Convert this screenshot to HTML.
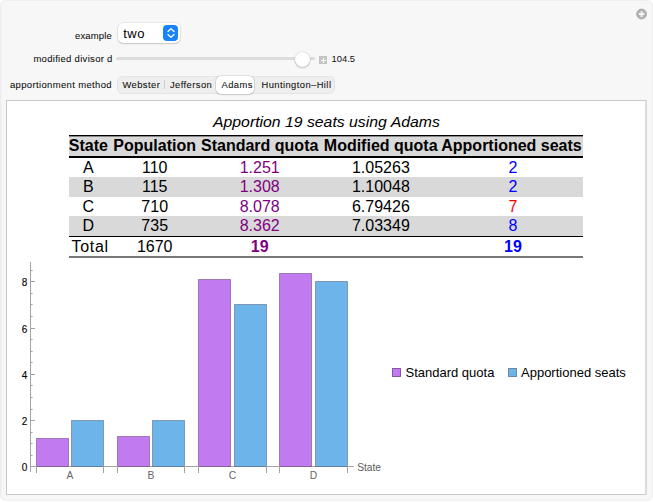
<!DOCTYPE html>
<html><head><meta charset="utf-8">
<style>
html,body{margin:0;padding:0;background:#fff;}
body{width:653px;height:502px;position:relative;overflow:hidden;font-family:"Liberation Sans",sans-serif;}
.frame{position:absolute;left:0;top:0;width:651px;height:499px;background:#f7f7f7;border:1px solid #ededed;border-top-color:#efefef;box-shadow:inset 1px 0 0 #f2f2f2;border-bottom-color:#f1f1f1;border-right-color:#eeeeee;border-radius:6px;}
.inner{position:absolute;left:6px;top:100px;width:638px;height:393px;background:#fff;border:1px solid #c9c9c9;border-right-color:#dcdcdc;box-shadow:1px 0 0 #dadada;}
.t{position:absolute;white-space:nowrap;font-family:"Liberation Sans",sans-serif;}
.r{position:absolute;left:69px;width:514px;}
.chart{position:absolute;left:0;top:0;}
.lbl{position:absolute;font-size:9.5px;letter-spacing:0.35px;line-height:12px;color:#111;-webkit-text-stroke:0.08px #111;text-align:right;white-space:nowrap;}
</style></head><body>
<div class="frame"></div>
<!-- plus circle icon -->
<svg style="position:absolute;left:634px;top:7px" width="15" height="15" viewBox="0 0 15 15"><circle cx="7.6" cy="7.05" r="4.95" fill="#b2b2b2" stroke="#a2a2a2" stroke-width="0.8"/><path d="M7.6 4.2 V9.9 M4.75 7.05 H10.45" stroke="#f2f2f2" stroke-width="2" /></svg>

<div class="lbl" style="left:-8px;width:120px;top:30px;letter-spacing:0.15px">example</div>
<div style="position:absolute;left:118px;top:23px;width:62px;height:20px;background:#fff;border-radius:5px;box-shadow:0 0 0 0.5px rgba(0,0,0,0.12),0 1px 1.5px rgba(0,0,0,0.15);"></div>
<div class="t" style="left:123.2px;top:26.2px;font-size:13px;letter-spacing:0.55px;line-height:16px;color:#000">two</div>
<div style="position:absolute;left:162.7px;top:25px;width:15.6px;height:16px;background:#1a82fb;border-radius:4px;"></div>
<svg style="position:absolute;left:162.5px;top:25px" width="16" height="16" viewBox="0 0 16 16"><path d="M5 6.5 L8 3.6 L11 6.5 M5 9.5 L8 12.4 L11 9.5" fill="none" stroke="#fff" stroke-width="1.3" stroke-linecap="round" stroke-linejoin="round"/></svg>

<div class="lbl" style="left:-7.3px;width:120px;top:53px;letter-spacing:0.3px">modified divisor d</div>
<div style="position:absolute;left:115.5px;top:57px;width:199px;height:3px;background:#dcdcdc;border-radius:1.5px;"></div>
<div style="position:absolute;left:295px;top:52px;width:15px;height:15px;background:#fff;border-radius:50%;box-shadow:0 0 0 0.5px rgba(0,0,0,0.12),0 1px 2px rgba(0,0,0,0.2);"></div>
<div style="position:absolute;left:319px;top:56px;width:8px;height:8px;background:#c4c4c4;"></div>
<div style="position:absolute;left:322.5px;top:57.5px;width:1px;height:5px;background:#fff;"></div>
<div style="position:absolute;left:320.5px;top:59.5px;width:5px;height:1px;background:#fff;"></div>
<div class="t" style="left:331.5px;top:53px;font-size:9.4px;line-height:11px;color:#111">104.5</div>

<div class="lbl" style="left:-8px;width:120px;top:79px;">apportionment method</div>
<div style="position:absolute;left:117px;top:75.5px;width:218px;height:18.8px;background:#eeeeee;border-radius:6px;box-shadow:inset 0 0 0 0.6px rgba(0,0,0,0.07);"></div>
<div style="position:absolute;left:163.5px;top:80px;width:1px;height:9px;background:#d0d0d0;"></div>
<div style="position:absolute;left:215.5px;top:75.6px;width:38.6px;height:18.2px;background:#fff;border-radius:5px;box-shadow:0 0 0 0.6px rgba(0,0,0,0.13),0 0.5px 1.5px rgba(0,0,0,0.15);"></div>
<div class="t" style="left:122.5px;top:79px;font-size:9.4px;letter-spacing:0.42px;line-height:12px;color:#111;-webkit-text-stroke:0.08px #111">Webster</div>
<div class="t" style="left:170px;top:79px;font-size:9.4px;letter-spacing:0.42px;line-height:12px;color:#111;-webkit-text-stroke:0.08px #111">Jefferson</div>
<div class="t" style="left:221.5px;top:79px;font-size:9.4px;letter-spacing:0.42px;line-height:12px;color:#111;-webkit-text-stroke:0.08px #111">Adams</div>
<div class="t" style="left:261.5px;top:79px;font-size:9.4px;letter-spacing:0.42px;line-height:12px;color:#111;-webkit-text-stroke:0.08px #111">Huntington–Hill</div>

<div class="inner"></div>
<div class="t" style="left:213px;top:113px;font-style:italic;font-size:14px;line-height:18px;color:#000;transform-origin:0 0;transform:scaleX(1.128);">Apportion 19 seats using Adams</div>
<div class="r" style="top:136px;height:20px;background:linear-gradient(#888 0,#888 0.5px,#d9d9d9 0.5px)"></div>
<div class="r" style="top:135px;height:1px;background:#000"></div>
<div class="r" style="top:156px;height:2px;background:#000"></div>
<div class="r" style="top:177px;height:20px;background:#d9d9d9"></div>
<div class="r" style="top:216px;height:20px;background:#d9d9d9"></div>
<div class="r" style="top:236px;height:1px;background:#000"></div>
<div class="r" style="top:256px;height:2px;background:#777"></div>
<div class="t" style="left:-11.700000000000003px;width:200px;text-align:center;top:136px;font-weight:bold;font-size:16px;line-height:20px">State</div>
<div class="t" style="left:54.69999999999999px;width:200px;text-align:center;top:136px;font-weight:bold;font-size:16px;line-height:20px">Population</div>
<div class="t" style="left:159.7px;width:200px;text-align:center;top:136px;font-weight:bold;font-size:16px;line-height:20px">Standard quota</div>
<div class="t" style="left:280.7px;width:200px;text-align:center;top:136px;font-weight:bold;font-size:16px;line-height:20px">Modified quota</div>
<div class="t" style="left:411.5px;width:200px;text-align:center;top:136px;font-weight:bold;font-size:16px;line-height:20px">Apportioned seats</div>
<div class="t" style="left:-11.700000000000003px;width:200px;text-align:center;top:158px;font-size:16px;line-height:20px;color:#000">A</div>
<div class="t" style="left:54.69999999999999px;width:200px;text-align:center;top:158px;font-size:16px;line-height:20px;color:#000">110</div>
<div class="t" style="left:159.7px;width:200px;text-align:center;top:158px;font-size:16px;line-height:20px;color:#800080">1.251</div>
<div class="t" style="left:280.9px;width:200px;text-align:center;top:158px;font-size:16px;line-height:20px;color:#000">1.05263</div>
<div class="t" style="left:413.0px;width:200px;text-align:center;top:158px;font-size:16px;line-height:20px;color:#0000ff">2</div>
<div class="t" style="left:-11.700000000000003px;width:200px;text-align:center;top:177px;font-size:16px;line-height:20px;color:#000">B</div>
<div class="t" style="left:54.69999999999999px;width:200px;text-align:center;top:177px;font-size:16px;line-height:20px;color:#000">115</div>
<div class="t" style="left:159.7px;width:200px;text-align:center;top:177px;font-size:16px;line-height:20px;color:#800080">1.308</div>
<div class="t" style="left:280.9px;width:200px;text-align:center;top:177px;font-size:16px;line-height:20px;color:#000">1.10048</div>
<div class="t" style="left:413.0px;width:200px;text-align:center;top:177px;font-size:16px;line-height:20px;color:#0000ff">2</div>
<div class="t" style="left:-11.700000000000003px;width:200px;text-align:center;top:197px;font-size:16px;line-height:20px;color:#000">C</div>
<div class="t" style="left:54.69999999999999px;width:200px;text-align:center;top:197px;font-size:16px;line-height:20px;color:#000">710</div>
<div class="t" style="left:159.7px;width:200px;text-align:center;top:197px;font-size:16px;line-height:20px;color:#800080">8.078</div>
<div class="t" style="left:280.9px;width:200px;text-align:center;top:197px;font-size:16px;line-height:20px;color:#000">6.79426</div>
<div class="t" style="left:413.0px;width:200px;text-align:center;top:197px;font-size:16px;line-height:20px;color:#ff0000">7</div>
<div class="t" style="left:-11.700000000000003px;width:200px;text-align:center;top:216px;font-size:16px;line-height:20px;color:#000">D</div>
<div class="t" style="left:54.69999999999999px;width:200px;text-align:center;top:216px;font-size:16px;line-height:20px;color:#000">735</div>
<div class="t" style="left:159.7px;width:200px;text-align:center;top:216px;font-size:16px;line-height:20px;color:#800080">8.362</div>
<div class="t" style="left:280.9px;width:200px;text-align:center;top:216px;font-size:16px;line-height:20px;color:#000">7.03349</div>
<div class="t" style="left:413.0px;width:200px;text-align:center;top:216px;font-size:16px;line-height:20px;color:#0000ff">8</div>
<div class="t" style="left:71.5px;top:236.6px;font-size:16px;letter-spacing:0.7px;line-height:20px">Total</div>
<div class="t" style="left:54.69999999999999px;width:200px;text-align:center;top:236.6px;font-size:16px;line-height:20px">1670</div>
<div class="t" style="left:159.7px;width:200px;text-align:center;top:236.6px;font-size:16px;line-height:20px;font-weight:bold;color:#800080">19</div>
<div class="t" style="left:413.0px;width:200px;text-align:center;top:236.6px;font-size:16px;line-height:20px;font-weight:bold;color:#0000ff">19</div>
<svg class="chart" width="653" height="502" viewBox="0 0 653 502">
<line x1="30.5" y1="262" x2="30.5" y2="472" stroke="#a3a3a3" stroke-width="1"/>
<line x1="30" y1="466.5" x2="354" y2="466.5" stroke="#a3a3a3" stroke-width="1"/>
<line x1="30" y1="466.5" x2="35" y2="466.5" stroke="#a3a3a3" stroke-width="1"/>
<text x="27.3" y="471.40" text-anchor="end" font-family="Liberation Sans" font-size="10" fill="#000" stroke="#000" stroke-width="0.12">0</text>
<line x1="30" y1="455.5" x2="32.6" y2="455.5" stroke="#a3a3a3" stroke-width="1"/>
<line x1="30" y1="443.5" x2="32.6" y2="443.5" stroke="#a3a3a3" stroke-width="1"/>
<line x1="30" y1="432.5" x2="32.6" y2="432.5" stroke="#a3a3a3" stroke-width="1"/>
<line x1="30" y1="420.5" x2="35" y2="420.5" stroke="#a3a3a3" stroke-width="1"/>
<text x="27.3" y="425.40" text-anchor="end" font-family="Liberation Sans" font-size="10" fill="#000" stroke="#000" stroke-width="0.12">2</text>
<line x1="30" y1="409.5" x2="32.6" y2="409.5" stroke="#a3a3a3" stroke-width="1"/>
<line x1="30" y1="397.5" x2="32.6" y2="397.5" stroke="#a3a3a3" stroke-width="1"/>
<line x1="30" y1="385.5" x2="32.6" y2="385.5" stroke="#a3a3a3" stroke-width="1"/>
<line x1="30" y1="374.5" x2="35" y2="374.5" stroke="#a3a3a3" stroke-width="1"/>
<text x="27.3" y="379.40" text-anchor="end" font-family="Liberation Sans" font-size="10" fill="#000" stroke="#000" stroke-width="0.12">4</text>
<line x1="30" y1="362.5" x2="32.6" y2="362.5" stroke="#a3a3a3" stroke-width="1"/>
<line x1="30" y1="351.5" x2="32.6" y2="351.5" stroke="#a3a3a3" stroke-width="1"/>
<line x1="30" y1="339.5" x2="32.6" y2="339.5" stroke="#a3a3a3" stroke-width="1"/>
<line x1="30" y1="328.5" x2="35" y2="328.5" stroke="#a3a3a3" stroke-width="1"/>
<text x="27.3" y="333.40" text-anchor="end" font-family="Liberation Sans" font-size="10" fill="#000" stroke="#000" stroke-width="0.12">6</text>
<line x1="30" y1="316.5" x2="32.6" y2="316.5" stroke="#a3a3a3" stroke-width="1"/>
<line x1="30" y1="304.5" x2="32.6" y2="304.5" stroke="#a3a3a3" stroke-width="1"/>
<line x1="30" y1="293.5" x2="32.6" y2="293.5" stroke="#a3a3a3" stroke-width="1"/>
<line x1="30" y1="281.5" x2="35" y2="281.5" stroke="#a3a3a3" stroke-width="1"/>
<text x="27.3" y="286.40" text-anchor="end" font-family="Liberation Sans" font-size="10" fill="#000" stroke="#000" stroke-width="0.12">8</text>
<line x1="30" y1="270.5" x2="32.6" y2="270.5" stroke="#a3a3a3" stroke-width="1"/>
<rect x="36.5" y="438.5" width="32" height="28" fill="#c27af0" stroke="rgba(80,40,100,0.45)" stroke-width="1"/>
<rect x="71.5" y="420.5" width="32" height="46" fill="#6db4ea" stroke="rgba(60,75,95,0.45)" stroke-width="1"/>
<line x1="36.5" y1="466" x2="36.5" y2="473" stroke="#a3a3a3" stroke-width="1"/>
<line x1="103.5" y1="466" x2="103.5" y2="473" stroke="#a3a3a3" stroke-width="1"/>
<text x="70.00" y="478.6" text-anchor="middle" font-family="Liberation Sans" font-size="10.3" fill="#666">A</text>
<rect x="117.5" y="436.5" width="32" height="30" fill="#c27af0" stroke="rgba(80,40,100,0.45)" stroke-width="1"/>
<rect x="152.5" y="420.5" width="32" height="46" fill="#6db4ea" stroke="rgba(60,75,95,0.45)" stroke-width="1"/>
<line x1="117.5" y1="466" x2="117.5" y2="473" stroke="#a3a3a3" stroke-width="1"/>
<line x1="184.5" y1="466" x2="184.5" y2="473" stroke="#a3a3a3" stroke-width="1"/>
<text x="151.00" y="478.6" text-anchor="middle" font-family="Liberation Sans" font-size="10.3" fill="#666">B</text>
<rect x="198.5" y="279.5" width="32" height="187" fill="#c27af0" stroke="rgba(80,40,100,0.45)" stroke-width="1"/>
<rect x="234.5" y="304.5" width="32" height="162" fill="#6db4ea" stroke="rgba(60,75,95,0.45)" stroke-width="1"/>
<line x1="198.5" y1="466" x2="198.5" y2="473" stroke="#a3a3a3" stroke-width="1"/>
<line x1="266.5" y1="466" x2="266.5" y2="473" stroke="#a3a3a3" stroke-width="1"/>
<text x="232.50" y="478.6" text-anchor="middle" font-family="Liberation Sans" font-size="10.3" fill="#666">C</text>
<rect x="279.5" y="273.5" width="32" height="193" fill="#c27af0" stroke="rgba(80,40,100,0.45)" stroke-width="1"/>
<rect x="315.5" y="281.5" width="32" height="185" fill="#6db4ea" stroke="rgba(60,75,95,0.45)" stroke-width="1"/>
<line x1="279.5" y1="466" x2="279.5" y2="473" stroke="#a3a3a3" stroke-width="1"/>
<line x1="347.5" y1="466" x2="347.5" y2="473" stroke="#a3a3a3" stroke-width="1"/>
<text x="313.50" y="478.6" text-anchor="middle" font-family="Liberation Sans" font-size="10.3" fill="#666">D</text>
<text x="357.2" y="470.9" font-family="Liberation Sans" font-size="10.2" fill="#5a5a5a">State</text>
<rect x="392.5" y="368.5" width="8" height="8" fill="#c27af0" stroke="rgba(70,20,100,0.6)" stroke-width="1"/>
<text x="405.5" y="376.8" font-family="Liberation Sans" font-size="13" fill="#000">Standard quota</text>
<rect x="508.5" y="368.5" width="8" height="8" fill="#6db4ea" stroke="rgba(40,70,110,0.55)" stroke-width="1"/>
<text x="521" y="376.8" font-family="Liberation Sans" font-size="13" fill="#000">Apportioned seats</text>
</svg>
</body></html>
